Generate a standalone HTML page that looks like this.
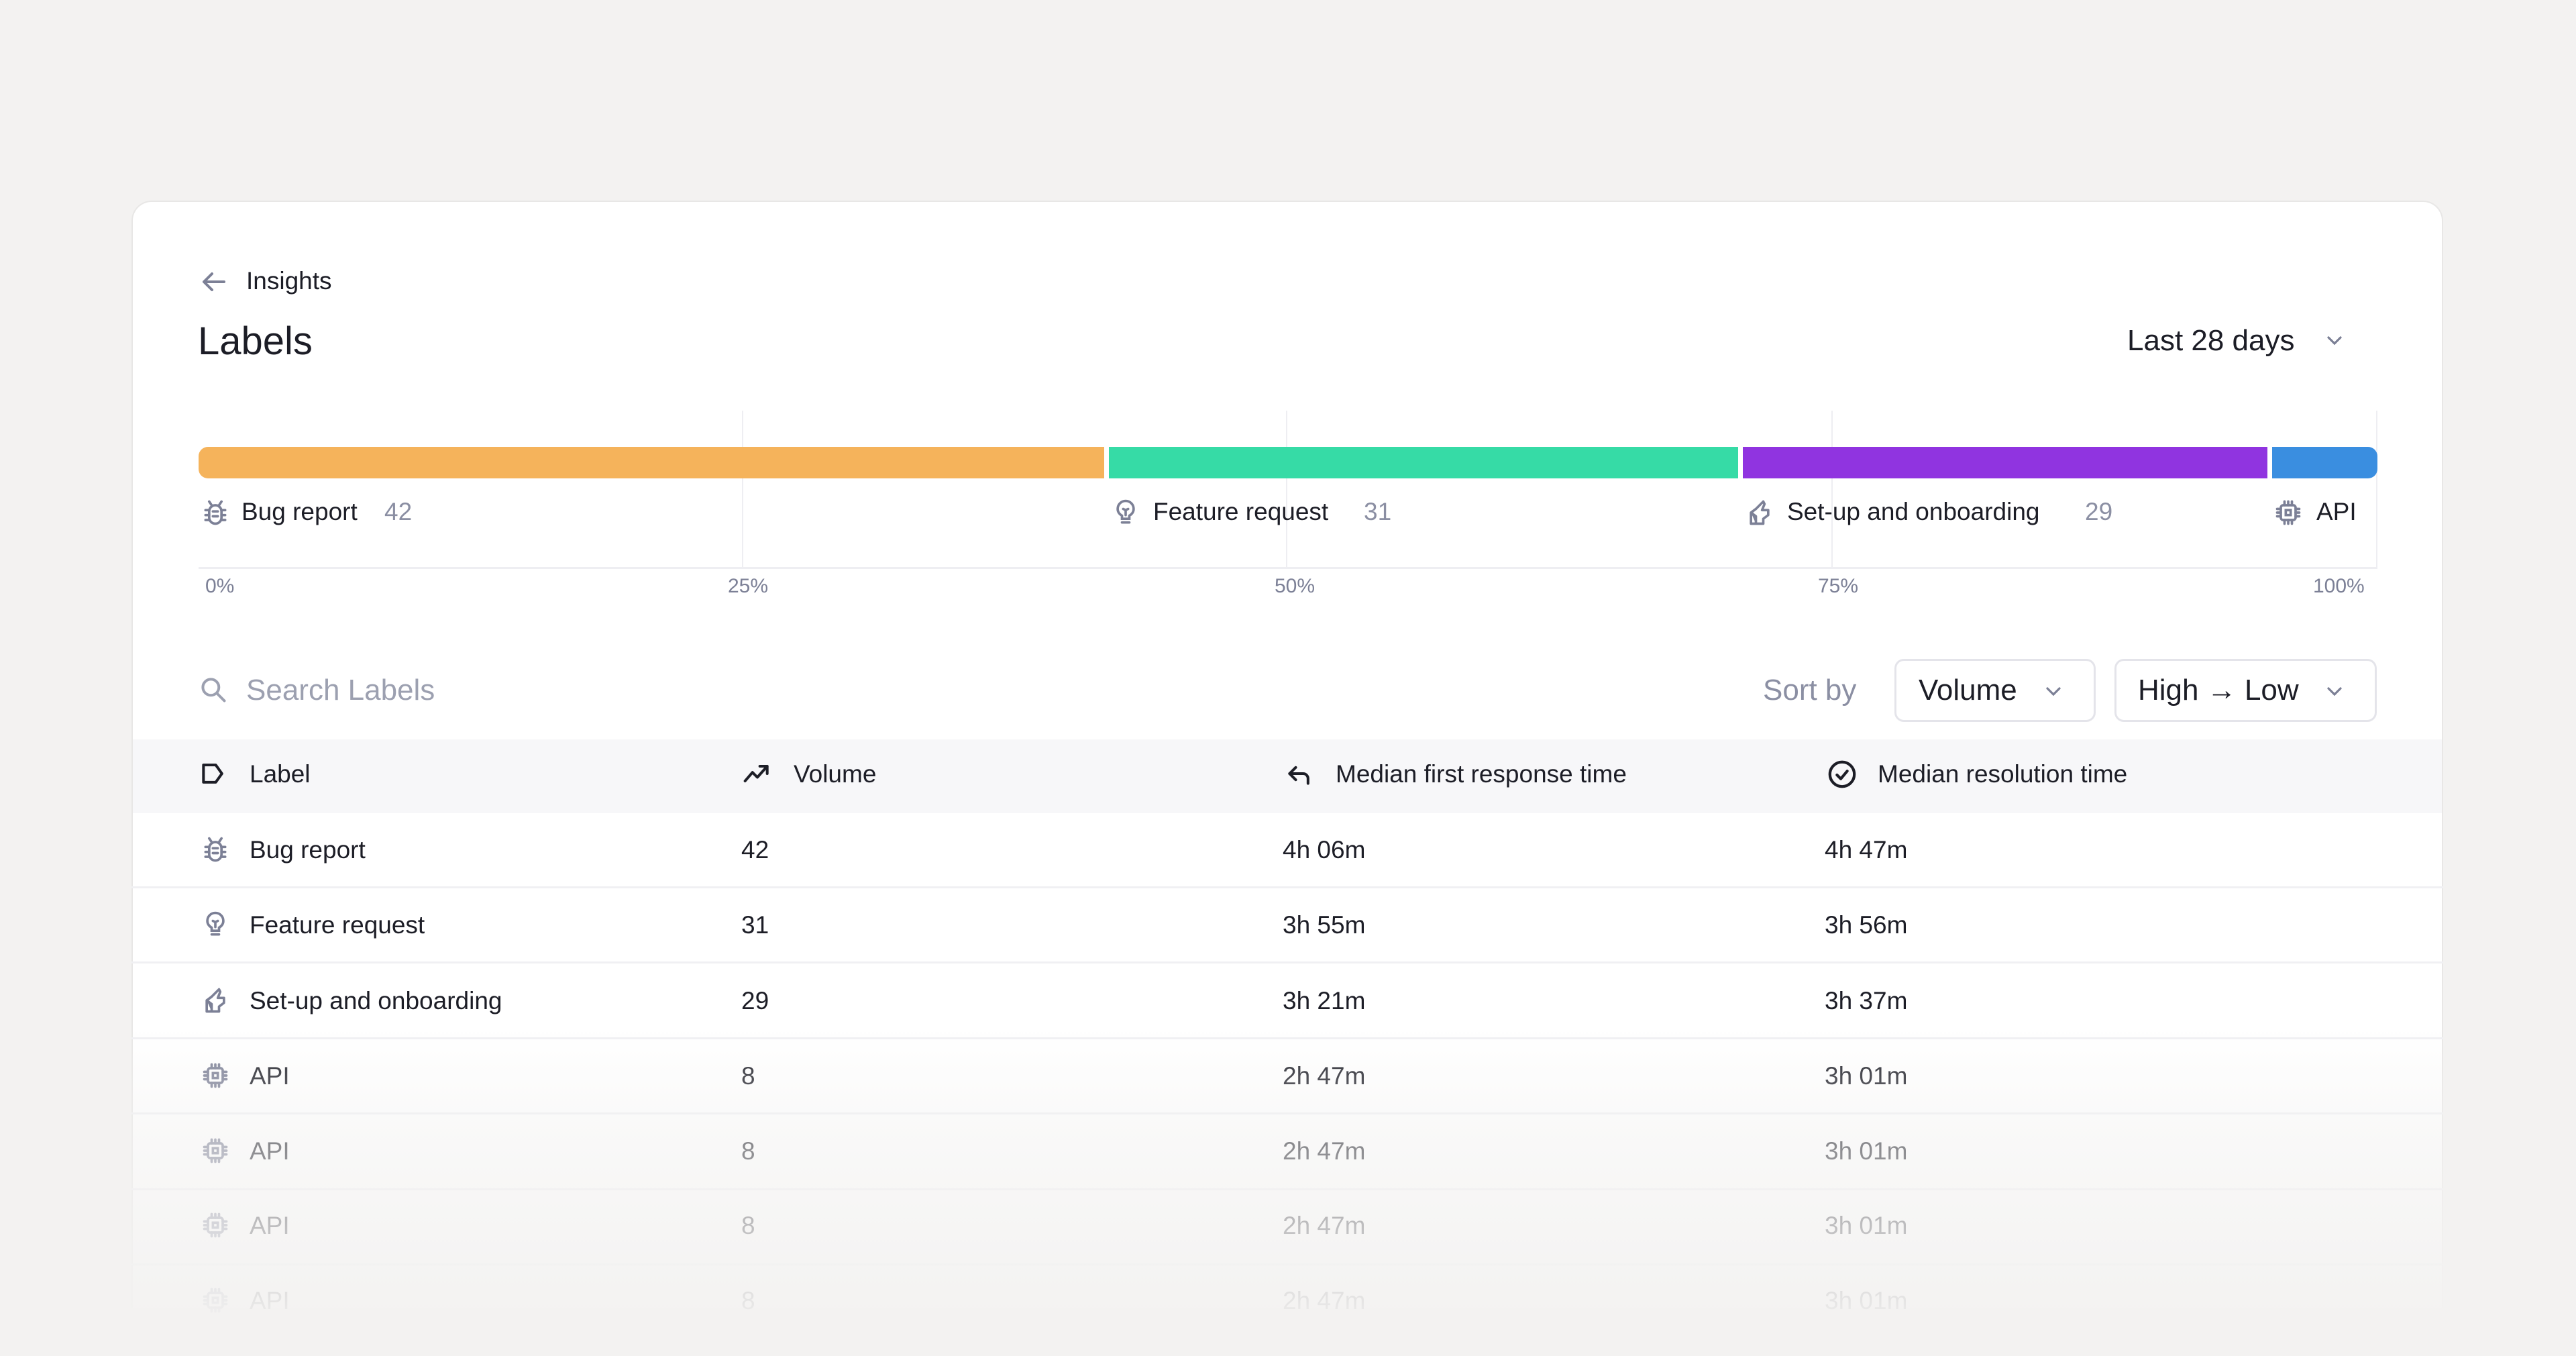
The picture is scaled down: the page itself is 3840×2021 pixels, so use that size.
<!DOCTYPE html>
<html><head><meta charset="utf-8"><style>
*{margin:0;padding:0;box-sizing:border-box}
html,body{width:3840px;height:2021px;overflow:hidden}
body{background:#f3f2f1;font-family:"Liberation Sans",sans-serif;color:#1c1d26;position:relative}
.card{position:absolute;left:196px;top:299px;width:3446px;height:1650px;background:#fff;border:2px solid #e8e7e6;border-bottom:none;border-radius:30px 30px 0 0;overflow:hidden}
.t{position:absolute;white-space:nowrap;line-height:1}
.ic{position:absolute}
.vl{position:absolute;top:612px;width:2px;height:235px;background:#eeeef2}
.seg{position:absolute;top:666px;height:47px}
.row{position:absolute;left:196px;width:3446px;height:3px;background:#f0f0f3}
.dd{position:absolute;top:982px;height:94px;border:3px solid #e4e4ea;border-radius:14px;background:#fff}
.fade{position:absolute;left:0;top:1530px;width:3840px;height:491px;background:linear-gradient(to bottom,rgba(243,242,241,0) 0%,rgba(243,242,241,.45) 30%,rgba(243,242,241,.8) 65%,rgba(243,242,241,.95) 85%,#f3f2f1 95%)}
</style></head><body>
<div class="card"></div>

<svg class="ic" style="left:298px;top:402px" width="40" height="36" viewBox="0 0 20 18"><path d="M18 9H3M9 3L3 9l6 6" fill="none" stroke="#7c8096" stroke-width="2" stroke-linecap="round" stroke-linejoin="round"/></svg>
<div class="t" style="left:367px;top:400px;font-size:37px">Insights</div>
<div class="t" style="left:295px;top:480px;font-size:58px">Labels</div>
<div class="t" style="left:3171px;top:486px;font-size:44px">Last 28 days</div>
<svg class="ic" style="left:3467px;top:497px" width="26" height="20" viewBox="0 0 13 10"><path d="M2 3l4.5 4.5L11 3" fill="none" stroke="#7c8096" stroke-width="1.6" stroke-linecap="round"/></svg>

<div class="vl" style="left:1106px"></div>
<div class="vl" style="left:1917px"></div>
<div class="vl" style="left:2730px"></div>
<div class="vl" style="left:3542px"></div>
<div style="position:absolute;left:296px;top:845px;width:3248px;height:3px;background:#eeeef2"></div>
<div class="seg" style="left:296px;width:1350px;background:#f5b35b;border-radius:14px 0 0 14px"></div>
<div class="seg" style="left:1653px;width:938px;background:#36dba6"></div>
<div class="seg" style="left:2598px;width:782px;background:#9034e0"></div>
<div class="seg" style="left:3387px;width:157px;background:#3a8ee0;border-radius:0 14px 14px 0"></div>

<svg class="ic" style="left:299px;top:742px" width="44" height="44" viewBox="0 0 24 24" fill="none" stroke="#7c8096" stroke-width="2" stroke-linecap="round"><rect x="7" y="6" width="10" height="15" rx="5"/><path d="M10 11h4M10 15h4M9 6L7 3M15 6l2-3M4 10h3M4 14h3M4 18h3M17 10h3M17 14h3M17 18h3"/></svg>
<div class="t" style="left:360px;top:744px;font-size:37px">Bug report</div>
<div class="t" style="left:573px;top:744px;font-size:37px;color:#8b8fa3">42</div>
<svg class="ic" style="left:1656px;top:742px" width="44" height="44" viewBox="0 0 24 24" fill="none" stroke="#7c8096" stroke-width="2" stroke-linecap="round"><path d="M9 17v-2.5C6.5 13 5.5 11 5.5 9a6.5 6.5 0 0113 0c0 2-1 4-3.5 5.5V17zM9 20h6M12 14v-4l-2-1M12 10l2-1"/></svg>
<div class="t" style="left:1719px;top:744px;font-size:37px">Feature request</div>
<div class="t" style="left:2033px;top:744px;font-size:37px;color:#8b8fa3">31</div>
<svg class="ic" style="left:2601px;top:742px" width="44" height="44" viewBox="0 0 24 24" fill="none" stroke="#7c8096" stroke-width="2" stroke-linejoin="round"><path d="M5 21v-9l4-3 6-6 1 2-2 5h5v4l-4 3v4z"/><path d="M5 12l4 3v6" fill="#7c8096"/></svg>
<div class="t" style="left:2664px;top:744px;font-size:37px">Set-up and onboarding</div>
<div class="t" style="left:3108px;top:744px;font-size:37px;color:#8b8fa3">29</div>
<svg class="ic" style="left:3389px;top:742px" width="44" height="44" viewBox="0 0 24 24" fill="none" stroke="#7c8096" stroke-width="2" stroke-linecap="round"><rect x="6" y="6" width="12" height="12" rx="2"/><rect x="10" y="10" width="4" height="4"/><path d="M9 3v3M12 3v3M15 3v3M9 18v3M12 18v3M15 18v3M3 9h3M3 12h3M3 15h3M18 9h3M18 12h3M18 15h3"/></svg>
<div class="t" style="left:3453px;top:744px;font-size:37px">API</div>

<div class="t" style="left:306px;top:859px;font-size:30px;color:#7c8096">0%</div>
<div class="t" style="left:1085px;top:859px;font-size:30px;color:#7c8096">25%</div>
<div class="t" style="left:1900px;top:859px;font-size:30px;color:#7c8096">50%</div>
<div class="t" style="left:2710px;top:859px;font-size:30px;color:#7c8096">75%</div>
<div class="t" style="left:3448px;top:859px;font-size:30px;color:#7c8096">100%</div>

<svg class="ic" style="left:296px;top:1006px" width="44" height="44" viewBox="0 0 24 24" fill="none" stroke="#9ca0b0" stroke-width="2.2" stroke-linecap="round"><circle cx="10" cy="10" r="6.5"/><path d="M15 15l6 6"/></svg>
<div class="t" style="left:367px;top:1007px;font-size:44px;color:#9ca0b0">Search Labels</div>
<div class="t" style="left:2628px;top:1007px;font-size:44px;color:#8b8fa3">Sort by</div>
<div class="dd" style="left:2824px;width:300px"></div>
<div class="t" style="left:2860px;top:1007px;font-size:44px">Volume</div>
<svg class="ic" style="left:3048px;top:1020px" width="26" height="20" viewBox="0 0 13 10"><path d="M2 3l4.5 4.5L11 3" fill="none" stroke="#7c8096" stroke-width="1.6" stroke-linecap="round"/></svg>
<div class="dd" style="left:3152px;width:391px"></div>
<div class="t" style="left:3187px;top:1007px;font-size:44px">High → Low</div>
<svg class="ic" style="left:3467px;top:1020px" width="26" height="20" viewBox="0 0 13 10"><path d="M2 3l4.5 4.5L11 3" fill="none" stroke="#7c8096" stroke-width="1.6" stroke-linecap="round"/></svg>

<div style="position:absolute;left:198px;top:1102px;width:3442px;height:110px;background:#f7f7f9"></div>
<svg class="ic" style="left:296px;top:1131px" width="44" height="44" viewBox="0 0 24 24" fill="none" stroke="#1c1d26" stroke-width="2.2" stroke-linejoin="round"><path d="M4 5h10l5 7-5 7H4z"/></svg>
<div class="t" style="left:372px;top:1135px;font-size:37px">Label</div>
<svg class="ic" style="left:1106px;top:1131px" width="46" height="44" viewBox="0 0 24 24" fill="none" stroke="#1c1d26" stroke-width="2.2" stroke-linecap="round" stroke-linejoin="round"><path d="M2 18l6-7 4 4 8-9M14 6h6v6"/></svg>
<div class="t" style="left:1183px;top:1135px;font-size:37px">Volume</div>
<svg class="ic" style="left:1915px;top:1131px" width="44" height="44" viewBox="0 0 24 24" fill="none" stroke="#1c1d26" stroke-width="2.2" stroke-linecap="round" stroke-linejoin="round"><path d="M9 7l-5 5 5 5M4 12h11a4 4 0 014 4v4"/></svg>
<div class="t" style="left:1991px;top:1135px;font-size:37px">Median first response time</div>
<svg class="ic" style="left:2723px;top:1131px" width="46" height="46" viewBox="0 0 24 24" fill="none" stroke="#1c1d26" stroke-width="2.2" stroke-linecap="round" stroke-linejoin="round"><circle cx="12" cy="12" r="9.5"/><path d="M8 12.5l3 3 5-6"/></svg>
<div class="t" style="left:2799px;top:1135px;font-size:37px">Median resolution time</div>

<div class="row" style="top:1321px"></div>
<div class="row" style="top:1433px"></div>
<div class="row" style="top:1546px"></div>
<div class="row" style="top:1658px"></div>
<div class="row" style="top:1771px"></div>
<div class="row" style="top:1883px"></div>

<svg class="ic" style="left:299px;top:1244px" width="44" height="44" viewBox="0 0 24 24" fill="none" stroke="#7c8096" stroke-width="2" stroke-linecap="round"><rect x="7" y="6" width="10" height="15" rx="5"/><path d="M10 11h4M10 15h4M9 6L7 3M15 6l2-3M4 10h3M4 14h3M4 18h3M17 10h3M17 14h3M17 18h3"/></svg>
<div class="t" style="left:372px;top:1248px;font-size:37px">Bug report</div>
<div class="t" style="left:1105px;top:1248px;font-size:37px">42</div>
<div class="t" style="left:1912px;top:1248px;font-size:37px">4h 06m</div>
<div class="t" style="left:2720px;top:1248px;font-size:37px">4h 47m</div>

<svg class="ic" style="left:299px;top:1356px" width="44" height="44" viewBox="0 0 24 24" fill="none" stroke="#7c8096" stroke-width="2" stroke-linecap="round"><path d="M9 17v-2.5C6.5 13 5.5 11 5.5 9a6.5 6.5 0 0113 0c0 2-1 4-3.5 5.5V17zM9 20h6M12 14v-4l-2-1M12 10l2-1"/></svg>
<div class="t" style="left:372px;top:1360px;font-size:37px">Feature request</div>
<div class="t" style="left:1105px;top:1360px;font-size:37px">31</div>
<div class="t" style="left:1912px;top:1360px;font-size:37px">3h 55m</div>
<div class="t" style="left:2720px;top:1360px;font-size:37px">3h 56m</div>

<svg class="ic" style="left:299px;top:1469px" width="44" height="44" viewBox="0 0 24 24" fill="none" stroke="#7c8096" stroke-width="2" stroke-linejoin="round"><path d="M5 21v-9l4-3 6-6 1 2-2 5h5v4l-4 3v4z"/><path d="M5 12l4 3v6" fill="#7c8096"/></svg>
<div class="t" style="left:372px;top:1473px;font-size:37px">Set-up and onboarding</div>
<div class="t" style="left:1105px;top:1473px;font-size:37px">29</div>
<div class="t" style="left:1912px;top:1473px;font-size:37px">3h 21m</div>
<div class="t" style="left:2720px;top:1473px;font-size:37px">3h 37m</div>

<svg class="ic" style="left:299px;top:1581px" width="44" height="44" viewBox="0 0 24 24" fill="none" stroke="#7c8096" stroke-width="2" stroke-linecap="round"><rect x="6" y="6" width="12" height="12" rx="2"/><rect x="10" y="10" width="4" height="4"/><path d="M9 3v3M12 3v3M15 3v3M9 18v3M12 18v3M15 18v3M3 9h3M3 12h3M3 15h3M18 9h3M18 12h3M18 15h3"/></svg>
<div class="t" style="left:372px;top:1585px;font-size:37px">API</div>
<div class="t" style="left:1105px;top:1585px;font-size:37px">8</div>
<div class="t" style="left:1912px;top:1585px;font-size:37px">2h 47m</div>
<div class="t" style="left:2720px;top:1585px;font-size:37px">3h 01m</div>

<svg class="ic" style="left:299px;top:1693px" width="44" height="44" viewBox="0 0 24 24" fill="none" stroke="#7c8096" stroke-width="2" stroke-linecap="round"><rect x="6" y="6" width="12" height="12" rx="2"/><rect x="10" y="10" width="4" height="4"/><path d="M9 3v3M12 3v3M15 3v3M9 18v3M12 18v3M15 18v3M3 9h3M3 12h3M3 15h3M18 9h3M18 12h3M18 15h3"/></svg>
<div class="t" style="left:372px;top:1697px;font-size:37px">API</div>
<div class="t" style="left:1105px;top:1697px;font-size:37px">8</div>
<div class="t" style="left:1912px;top:1697px;font-size:37px">2h 47m</div>
<div class="t" style="left:2720px;top:1697px;font-size:37px">3h 01m</div>

<svg class="ic" style="left:299px;top:1804px" width="44" height="44" viewBox="0 0 24 24" fill="none" stroke="#7c8096" stroke-width="2" stroke-linecap="round"><rect x="6" y="6" width="12" height="12" rx="2"/><rect x="10" y="10" width="4" height="4"/><path d="M9 3v3M12 3v3M15 3v3M9 18v3M12 18v3M15 18v3M3 9h3M3 12h3M3 15h3M18 9h3M18 12h3M18 15h3"/></svg>
<div class="t" style="left:372px;top:1808px;font-size:37px">API</div>
<div class="t" style="left:1105px;top:1808px;font-size:37px">8</div>
<div class="t" style="left:1912px;top:1808px;font-size:37px">2h 47m</div>
<div class="t" style="left:2720px;top:1808px;font-size:37px">3h 01m</div>

<svg class="ic" style="left:299px;top:1916px" width="44" height="44" viewBox="0 0 24 24" fill="none" stroke="#7c8096" stroke-width="2" stroke-linecap="round"><rect x="6" y="6" width="12" height="12" rx="2"/><rect x="10" y="10" width="4" height="4"/><path d="M9 3v3M12 3v3M15 3v3M9 18v3M12 18v3M15 18v3M3 9h3M3 12h3M3 15h3M18 9h3M18 12h3M18 15h3"/></svg>
<div class="t" style="left:372px;top:1920px;font-size:37px">API</div>
<div class="t" style="left:1105px;top:1920px;font-size:37px">8</div>
<div class="t" style="left:1912px;top:1920px;font-size:37px">2h 47m</div>
<div class="t" style="left:2720px;top:1920px;font-size:37px">3h 01m</div>

<div class="fade"></div>
</body></html>
